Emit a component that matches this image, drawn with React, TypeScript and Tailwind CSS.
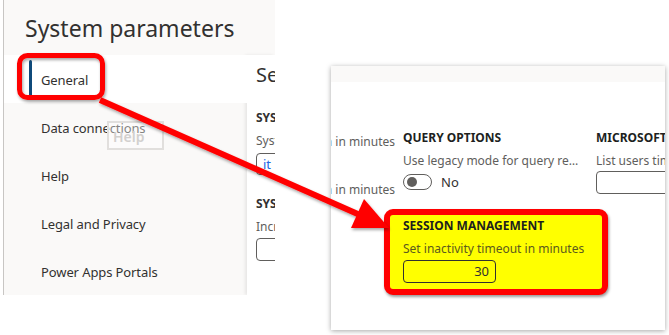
import React from 'react';

const navItems = ['General', 'Data connections', 'Help', 'Legal and Privacy', 'Power Apps Portals'];

const font = "font-['Noto_Sans',sans-serif]";

const Annotations: React.FC = () => (
    <svg className="absolute inset-0 pointer-events-none" width="669" height="335" viewBox="0 0 669 335">
        <defs>
            <filter id="sh" x="-20%" y="-20%" width="140%" height="140%">
                <feDropShadow dx="1" dy="2" stdDeviation="1.5" floodColor="#000" floodOpacity="0.35" />
            </filter>
        </defs>
        <g filter="url(#sh)">
            <rect x="19.5" y="55.5" width="83" height="42" rx="8" fill="none" stroke="#ff0000" strokeWidth="5" />
            <line x1="100" y1="100" x2="360" y2="215" stroke="#ff0000" strokeWidth="6" />
            <polygon points="389,228 351,228 364,199" fill="#ff0000" />
        </g>
    </svg>
);

const App: React.FC = () => {
    return (
        <div className={`relative w-[669px] h-[335px] bg-white overflow-hidden ${font} text-[#323130]`}>
            {/* background screenshot */}
            <div className="ml-[3px] w-[272px] h-[295px] border-l border-[#c8c6c4] bg-[#faf9f8] flex flex-col overflow-hidden">
                <div className="h-[55px] shrink-0 pl-[21px] pt-[13px]">
                    <h1 className="text-[23px] leading-[30px] whitespace-nowrap">System parameters</h1>
                </div>
                <div className="flex flex-1">
                    <nav className="w-[243px] shrink-0 flex flex-col">
                        {navItems.map((item, i) => (
                            <div
                                key={item}
                                className={`relative h-[48px] flex items-center pl-[37px] pt-[3px] text-[13px] tracking-[-0.1px] whitespace-nowrap ${
                                    i === 0 ? 'bg-white h-[45px]' : ''
                                }`}
                            >
                                {i === 0 && <span className="absolute left-[25px] top-[5px] w-[3px] h-[37px] bg-[#0f4a7a] rounded-sm" />}
                                {item}
                            </div>
                        ))}
                    </nav>
                    <div className="flex-1 bg-white shadow-[-2px_0_3px_rgba(0,0,0,0.08)] pl-[9px] overflow-hidden whitespace-nowrap">
                        <div className="text-[20px] leading-[26px] mt-[7px]">Set</div>
                        <div className="mt-[21px] text-[12px] leading-[18px] font-bold">SYSTEM</div>
                        <div className="mt-[5px] text-[12px] leading-[18px] text-[#605e5c]">System</div>
                        <div className="mt-[3px] h-[22px] w-[60px] border border-[#605e5c] rounded-sm px-[6px] text-[13px] leading-[20px] text-[#2266e3]">it</div>
                        <div className="mt-[20px] text-[12px] leading-[18px] font-bold">SYSTEM</div>
                        <div className="mt-[5px] text-[12px] leading-[18px] text-[#605e5c]">Increase</div>
                        <div className="mt-[2px] h-[23px] w-[60px] border border-[#605e5c] rounded-sm" />
                    </div>
                </div>
            </div>

            {/* drag ghost */}
            <div className="absolute left-[107px] top-[121px] w-[57px] h-[29px] border-2 border-[#e1dfdd] bg-white/40 pl-[4px] pt-[6px] text-[14px] leading-[16px] font-semibold text-[#d2d0ce]">
                Help
            </div>

            {/* zoomed screenshot */}
            <div className="absolute left-[331px] top-[66px] w-[334px] h-[264px] bg-white shadow-[0_1px_5px_rgba(0,0,0,0.35)] overflow-hidden flex flex-col">
                <div className="h-[16px] shrink-0 bg-[#faf9f8]" />
                <div className="flex pt-[47px] whitespace-nowrap text-[12px] leading-[18px]">
                    <div className="w-[64px] shrink-0 overflow-hidden flex flex-col items-end text-[#605e5c]">
                        <div className="mt-[4px]">Set session duration in minutes</div>
                        <div className="mt-[30px]">Set session duration in minutes</div>
                    </div>
                    <div className="w-[201px] shrink-0 pl-[8px] pr-[16px] flex flex-col">
                        <div className="font-bold text-[#201f1e]">QUERY OPTIONS</div>
                        <div className="mt-[5px] text-[#605e5c] truncate">Use legacy mode for query related operations</div>
                        <div className="mt-[3px] flex items-center h-[17px]">
                            <span className="w-[29px] h-[16px] rounded-full border border-[#605e5c] flex items-center pl-[3px]">
                                <span className="w-[10px] h-[10px] rounded-full bg-[#605e5c]" />
                            </span>
                            <span className="ml-[9px] text-[13px]">No</span>
                        </div>
                        <div className="mt-[19px] -ml-[19px] w-[224px] h-[86px] rounded-[9px] border-[6px] border-[#ff0000] bg-[#ffff00] shadow-[1px_2px_3px_rgba(0,0,0,0.4)] pl-[13px] pt-[2px]">
                            <div className="font-bold text-[#201f1e]">SESSION MANAGEMENT</div>
                            <div className="mt-[5px] text-[#5c5a1e]">Set inactivity timeout in minutes</div>
                            <div className="mt-[2px] w-[93px] h-[23px] border border-[#323130] rounded-sm text-right pr-[6px] text-[13px] leading-[21px]">
                                30
                            </div>
                        </div>
                    </div>
                    <div className="flex-1 flex flex-col overflow-hidden">
                        <div className="font-bold text-[#201f1e]">MICROSOFT TEAMS</div>
                        <div className="mt-[5px] text-[#605e5c]">List users time</div>
                        <div className="mt-[1px] h-[23px] w-[80px] border border-[#605e5c] rounded-sm" />
                    </div>
                </div>
            </div>

            <Annotations />
        </div>
    );
};

export default App;
